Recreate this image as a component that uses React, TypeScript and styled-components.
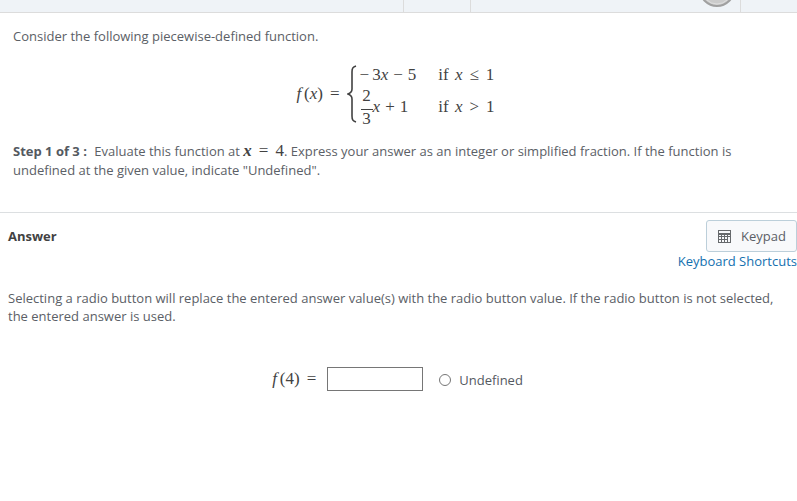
import React from "react";
import styled, { createGlobalStyle } from "styled-components";

const GlobalStyle = createGlobalStyle`
  *, *::before, *::after { box-sizing: border-box; }
  body {
    margin: 0;
    background: #fff;
    color: #5b6066;
    font: 13px/18px "Open Sans", "Noto Sans", sans-serif;
    overflow-x: hidden;
  }
`;

const TopBar = styled.header`
  display: flex;
  height: 13px;
  overflow: hidden;
  background: #eff3f7;
  border-bottom: 1px solid #dcdcdc;
`;

const BarCell = styled.div<{ $width?: number }>`
  flex: ${(p) => (p.$width ? `0 0 ${p.$width}px` : "1 1 0")};
  display: flex;
  align-items: flex-end;
  justify-content: flex-end;
  & + & { border-left: 1px solid #dcdcdc; }
`;

const Knob = styled.svg`
  flex: none;
  width: 36px;
  height: 36px;
  margin: 0 5px 5px 0;
`;

const Question = styled.section`
  padding: 14px 12px 32px 13px;
  border-bottom: 1px solid #dcdfe1;
`;

const Paragraph = styled.p`
  margin: 0;
`;

const Step = styled(Paragraph)`
  line-height: 19px;
`;

const StepLabel = styled.b`
  margin-right: 4px;
  color: #54595f;
`;

const MathText = styled.span`
  color: #424242;
  font-family: "Liberation Serif", serif;
  font-size: 17px;
  line-height: 18px;
  white-space: nowrap;
`;

const FunctionName = styled.i`
  margin-right: 3px;
`;

const Variable = styled.i<{ $bold?: boolean }>`
  font-weight: ${(p) => (p.$bold ? 700 : 400)};
`;

const Rel = styled.span`
  margin: 0 7px;
`;

const Op = styled.span`
  margin: 0 5px;
`;

const Sign = styled.span`
  margin: 0 3px;
`;

const Condition = styled.span`
  margin-right: 2px;
`;

const Equation = styled.div`
  display: flex;
  justify-content: center;
  align-items: center;
  height: 58px;
  margin: 20px 0 19px;
  padding-right: 7px;
`;

const Brace = styled.svg`
  flex: none;
  width: 10px;
  height: 58px;
`;

const Cases = styled.div`
  display: grid;
  grid-template-columns: auto auto;
  gap: 4px 22px;
  align-items: center;
  margin-bottom: -4px;
`;

const CaseLine = styled(MathText)`
  display: flex;
  align-items: center;
`;

const Fraction = styled.span`
  display: inline-flex;
  flex-direction: column;
  align-items: center;
  width: 12px;
  margin-left: 4px;
  line-height: 16px;
`;

const Numerator = styled.span`
  height: 21px;
`;

const Denominator = styled.span`
  width: 12px;
  border-top: 1px solid #424242;
  padding-top: 1px;
  text-align: center;
`;

const Answer = styled.section`
  padding: 7px 0 0 8px;
`;

const AnswerHead = styled.div`
  display: flex;
  justify-content: space-between;
  align-items: flex-start;
`;

const Heading = styled.h2`
  margin: 7px 0 0;
  color: #424242;
  font-size: 13px;
  line-height: 18px;
`;

const Tools = styled.div`
  display: flex;
  flex-direction: column;
  align-items: flex-end;
`;

const KeypadButton = styled.button`
  display: flex;
  align-items: center;
  gap: 10px;
  height: 32px;
  padding: 0 10px 0 11px;
  border: 1px solid #bccfda;
  border-radius: 3px;
  background: #f8f9fb;
  color: #5b6066;
  font: inherit;
`;

const ShortcutLink = styled.a`
  color: #1470af;
  text-decoration: none;
`;

const Note = styled(Paragraph)`
  margin-top: 19px;
  padding-right: 12px;
`;

const ResponseRow = styled.div`
  display: flex;
  justify-content: center;
  align-items: center;
  margin-top: 42px;
  padding-right: 10px;
`;

const AnswerInput = styled.input`
  width: 96px;
  height: 24px;
  margin-left: 4px;
  padding: 1px 4px;
  border: 1px solid #767676;
  border-radius: 0;
  background: #fff;
  font: 17px "Liberation Serif", serif;
`;

const RadioLabel = styled.label`
  display: flex;
  align-items: center;
  gap: 8px;
  margin: 2px 0 0 16px;
  color: #54595f;
`;

const Radio = styled.input`
  appearance: none;
  width: 12px;
  height: 12px;
  margin: 0;
  border: 1px solid #767676;
  border-radius: 50%;
  background: #fff;
  &:checked { border-width: 4px; }
`;

function KeypadIcon() {
  return (
    <svg width="13" height="14" viewBox="0 0 13 14" aria-hidden="true">
      <path fill="#66696c" fillRule="evenodd" d="M0 1h13v13H0zM1 2v2h11V2zM1 6v1h2V6zM4 6v1h2V6zM7 6v1h2V6zM10 6v1h2V6zM1 8v2h2V8zM4 8v2h2V8zM7 8v2h2V8zM10 8v5h2V8zM1 11v2h2v-2zM4 11v2h2v-2zM7 11v2h2v-2z" />
    </svg>
  );
}

export default function App() {
  return (
    <>
      <GlobalStyle />
      <TopBar>
        <BarCell />
        <BarCell $width={67} />
        <BarCell $width={270}>
          <Knob viewBox="0 0 36 36" aria-hidden="true">
            <circle cx="18" cy="18" r="17" fill="#cbcbcb" stroke="#a0a0a0" strokeWidth="2" />
            <circle cx="18" cy="18" r="15" fill="none" stroke="#dedede" />
          </Knob>
        </BarCell>
        <BarCell $width={57} />
      </TopBar>
      <main>
        <Question>
          <Paragraph>Consider the following piecewise-defined function.</Paragraph>
          <Equation>
            <MathText><FunctionName>f</FunctionName>(<Variable>x</Variable>)<Rel>=</Rel></MathText>
            <Brace viewBox="0 0 10 58" aria-hidden="true">
              <path d="M9 1C6 2 5 3 5 7v17c0 3-1 4-4 5c3 1 4 2 4 5v17c0 4 1 5 4 6" fill="none" stroke="#424242" strokeWidth="1.6" />
            </Brace>
            <Cases>
              <CaseLine>
                <Sign>−</Sign>3<Variable>x</Variable><Op>−</Op>5
              </CaseLine>
              <MathText><Condition>if</Condition> <Variable>x</Variable><Rel>≤</Rel>1</MathText>
              <CaseLine>
                <Fraction>
                  <Numerator>2</Numerator>
                  <Denominator>3</Denominator>
                </Fraction>
                <Variable>x</Variable><Op>+</Op>1
              </CaseLine>
              <MathText><Condition>if</Condition> <Variable>x</Variable><Rel>&gt;</Rel>1</MathText>
            </Cases>
          </Equation>
          <Step>
            <StepLabel>Step 1 of 3 :</StepLabel> Evaluate this function at <MathText><Variable $bold>x</Variable><Rel>=</Rel>4</MathText>. Express your answer as an integer or simplified fraction. If the function is undefined at the given value, indicate "Undefined".
          </Step>
        </Question>
        <Answer>
          <AnswerHead>
            <Heading>Answer</Heading>
            <Tools>
              <KeypadButton type="button"><KeypadIcon />Keypad</KeypadButton>
              <ShortcutLink href="#shortcuts">Keyboard Shortcuts</ShortcutLink>
            </Tools>
          </AnswerHead>
          <Note>
            Selecting a radio button will replace the entered answer value(s) with the radio button value. If the radio button is not selected, the entered answer is used.
          </Note>
          <ResponseRow>
            <label htmlFor="answer"><MathText><FunctionName>f</FunctionName>(4)<Rel>=</Rel></MathText></label>
            <AnswerInput id="answer" type="text" />
            <RadioLabel>
              <Radio type="radio" name="undefined" />
              Undefined
            </RadioLabel>
          </ResponseRow>
        </Answer>
      </main>
    </>
  );
}
